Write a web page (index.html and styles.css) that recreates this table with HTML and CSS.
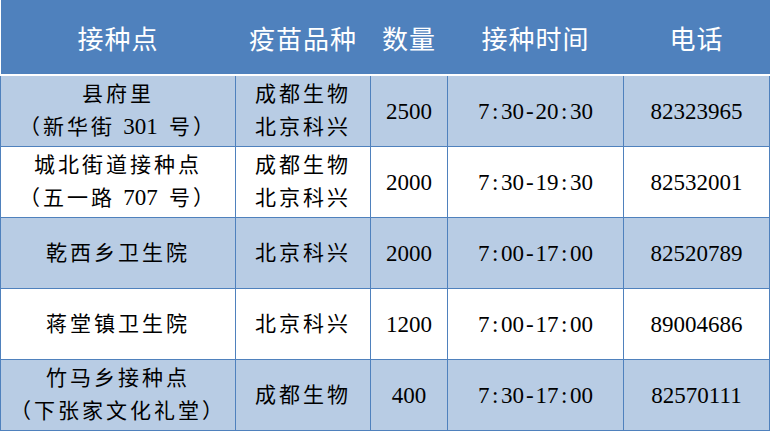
FILE: index.html
```html
<!DOCTYPE html>
<html lang="zh-CN">
<head>
<meta charset="utf-8">
<link rel="stylesheet" href="styles.css">
</head>
<body>
<table class="sched">
  <colgroup>
    <col class="c1"><col class="c2"><col class="c3"><col class="c4"><col class="c5">
  </colgroup>
  <thead>
    <tr>
      <th>接种点</th><th>疫苗品种</th><th>数量</th><th>接种时间</th><th>电话</th>
    </tr>
  </thead>
  <tbody>
    <tr class="alt">
      <td class="zh">县府里<br>（新华街 <span class="d">301</span> 号）</td>
      <td class="zh">成都生物<br>北京科兴</td>
      <td class="num">2500</td>
      <td class="num">7<span class="p">:</span>30<span class="p">-</span>20<span class="p">:</span>30</td>
      <td class="num">82323965</td>
    </tr>
    <tr>
      <td class="zh">城北街道接种点<br>（五一路 <span class="d">707</span> 号）</td>
      <td class="zh">成都生物<br>北京科兴</td>
      <td class="num">2000</td>
      <td class="num">7<span class="p">:</span>30<span class="p">-</span>19<span class="p">:</span>30</td>
      <td class="num">82532001</td>
    </tr>
    <tr class="alt">
      <td class="zh">乾西乡卫生院</td>
      <td class="zh">北京科兴</td>
      <td class="num">2000</td>
      <td class="num">7<span class="p">:</span>00<span class="p">-</span>17<span class="p">:</span>00</td>
      <td class="num">82520789</td>
    </tr>
    <tr>
      <td class="zh">蒋堂镇卫生院</td>
      <td class="zh">北京科兴</td>
      <td class="num">1200</td>
      <td class="num">7<span class="p">:</span>00<span class="p">-</span>17<span class="p">:</span>00</td>
      <td class="num">89004686</td>
    </tr>
    <tr class="alt">
      <td class="zh">竹马乡接种点<br>（下张家文化礼堂）</td>
      <td class="zh">成都生物</td>
      <td class="num">400</td>
      <td class="num">7<span class="p">:</span>30<span class="p">-</span>17<span class="p">:</span>00</td>
      <td class="num">82570111</td>
    </tr>
  </tbody>
</table>
</body>
</html>
```

FILE: styles.css
```css
html, body {
  margin: 0;
  padding: 0;
  background: #ffffff;
}

.sched {
  width: 769px;
  border-collapse: collapse;
  table-layout: fixed;
  font-family: "Liberation Serif", "Noto Sans CJK SC", serif;
  color: #000;
}

.c1 { width: 235px; }
.c2 { width: 135px; }
.c3 { width: 77px; }
.c4 { width: 176px; }
.c5 { width: 146px; }

.sched th {
  height: 74px;
  padding: 0;
  background: #4f81bd;
  color: #ffffff;
  font-family: "Noto Sans CJK SC", sans-serif;
  font-weight: normal;
  font-size: 26px;
  letter-spacing: 1px;
  text-align: center;
  vertical-align: middle;
  border: 0;
  border-bottom: 2px solid #ffffff;
}

.sched td {
  height: 70px;
  padding: 0;
  text-align: center;
  vertical-align: middle;
  border: 1px solid #4f81bd;
  background: #ffffff;
}

.sched tr.alt td {
  background: #b8cce4;
}

.sched td.zh {
  font-size: 21px;
  line-height: 33px;
  letter-spacing: 3px;
}

.sched td.num {
  font-size: 23px;
  line-height: 33px;
}

.d {
  font-size: 23px;
  line-height: 1;
  letter-spacing: 0;
  margin-right: 3px;
}

.p {
  display: inline-block;
  width: 0.5em;
  text-align: center;
}
```
